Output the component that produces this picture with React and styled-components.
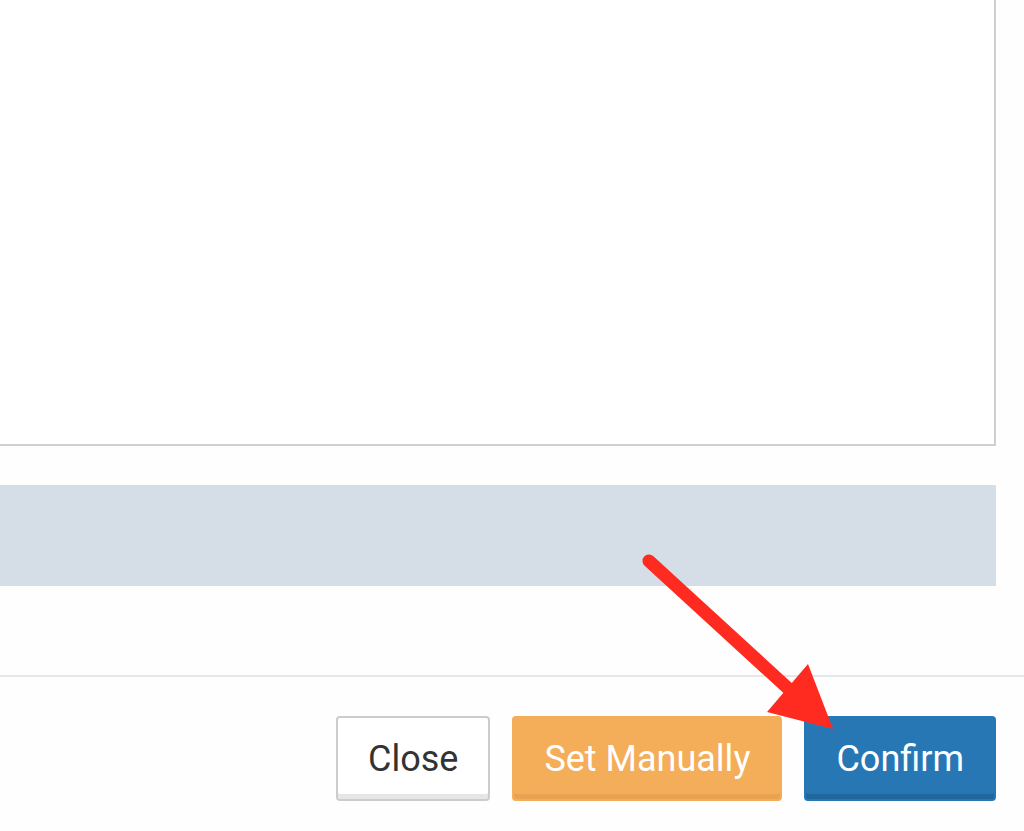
import React from "react";
import styled, { createGlobalStyle } from "styled-components";

const GlobalStyle = createGlobalStyle`
  html, body {
    margin: 0;
    padding: 0;
    background: #ffffff;
  }
  body {
    font-family: Roboto, "Liberation Sans", Arial, sans-serif;
  }
`;

const Modal = styled.div`
  position: relative;
  width: 1024px;
  height: 831px;
  overflow: hidden;
  background: #fefefe;
  display: flex;
  flex-direction: column;
`;

const ModalBody = styled.div`
  display: flex;
  flex-direction: column;
  padding: 0 28px 0 0;
  margin: -6px 0 0 -6px;
  height: 681px;
  box-sizing: border-box;
`;

const TextArea = styled.div`
  height: 452px;
  box-sizing: border-box;
  border: 2px solid #cfcfcf;
  background: #ffffff;
`;

const InfoBar = styled.div`
  margin-top: 39px;
  height: 101px;
  background: #d5dde6;
`;

const Footer = styled.div`
  border-top: 2px solid #e6e6e6;
  display: flex;
  justify-content: flex-end;
  gap: 22px;
  padding: 39px 28px 0 0;
`;

const palette = {
  default: { bg: "#ffffff", band: "#e6e6e6", border: "#cccccc", color: "#333333" },
  warning: { bg: "#f4ad58", band: "#e9a250", border: "#f4ad58", color: "#ffffff" },
  primary: { bg: "#2677b4", band: "#20679d", border: "#2677b4", color: "#ffffff" },
};

const Button = styled.button`
  height: 85px;
  padding: 0 30px;
  box-sizing: border-box;
  border: 2px solid ${(p) => palette[p.$variant].border};
  border-radius: 4px;
  background: ${(p) => palette[p.$variant].bg};
  box-shadow: inset 0 -5px 0 ${(p) => palette[p.$variant].band};
  color: ${(p) => palette[p.$variant].color};
  font-family: Roboto, "Liberation Sans", Arial, sans-serif;
  font-size: 36px;
  line-height: 1;
  cursor: pointer;
`;

const Arrow = styled.svg`
  position: absolute;
  left: 0;
  top: 0;
  pointer-events: none;
`;

export default function App() {
  return (
    <>
      <GlobalStyle />
      <Modal>
        <ModalBody>
          <TextArea />
          <InfoBar />
        </ModalBody>
        <Footer>
          <Button $variant="default">Close</Button>
          <Button $variant="warning">Set Manually</Button>
          <Button $variant="primary">Confirm</Button>
        </Footer>
        <Arrow width="1024" height="831" viewBox="0 0 1024 831">
          <line
            x1="649"
            y1="561"
            x2="792"
            y2="692"
            stroke="#ff2a20"
            strokeWidth="13"
            strokeLinecap="round"
          />
          <polygon points="833,729 767,712 808,664" fill="#ff2a20" />
        </Arrow>
      </Modal>
    </>
  );
}
